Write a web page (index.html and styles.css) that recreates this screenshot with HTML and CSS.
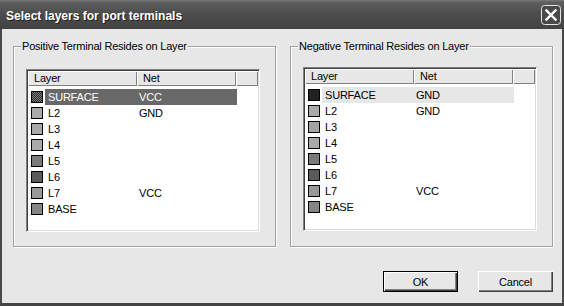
FILE: index.html
```html
<!DOCTYPE html>
<html>
<head>
<meta charset="utf-8">
<link rel="stylesheet" href="styles.css">
</head>
<body>
<div class="window">
  <div class="titlebar">
    <span class="title">Select layers for port terminals</span>
    <span class="close">
      <svg width="20" height="20" viewBox="0 0 20 20"><rect x="0.5" y="0.5" width="19" height="19" rx="3" fill="#4a4a4a" stroke="#e4e4e4"/><path d="M5.5 5.5 L14.5 14.5 M14.5 5.5 L5.5 14.5" stroke="#fff" stroke-width="2.4" stroke-linecap="square"/></svg>
    </span>
  </div>
  <div class="content">
    <div class="groups">
      <section class="group">
        <span class="legend">Positive Terminal Resides on Layer</span>
        <div class="list">
          <div class="lhead">
            <div class="hcell c-layer">Layer</div>
            <div class="hcell c-net">Net</div>
            <div class="hcell c-rest"></div>
          </div>
          <div class="rows">
            <div class="row"><span class="sw hatch"></span><span class="cells sel-dark"><span class="name">SURFACE</span><span class="net">VCC</span></span></div>
            <div class="row"><span class="sw g-aa"></span><span class="cells"><span class="name">L2</span><span class="net">GND</span></span></div>
            <div class="row"><span class="sw g-a8"></span><span class="cells"><span class="name">L3</span><span class="net"></span></span></div>
            <div class="row"><span class="sw g-aa"></span><span class="cells"><span class="name">L4</span><span class="net"></span></span></div>
            <div class="row"><span class="sw g-7a"></span><span class="cells"><span class="name">L5</span><span class="net"></span></span></div>
            <div class="row"><span class="sw g-5a"></span><span class="cells"><span class="name">L6</span><span class="net"></span></span></div>
            <div class="row"><span class="sw g-99"></span><span class="cells"><span class="name">L7</span><span class="net">VCC</span></span></div>
            <div class="row"><span class="sw g-85"></span><span class="cells"><span class="name">BASE</span><span class="net"></span></span></div>
          </div>
        </div>
      </section>
      <section class="group group-neg">
        <span class="legend">Negative Terminal Resides on Layer</span>
        <div class="list list-tall">
          <div class="lhead">
            <div class="hcell c-layer">Layer</div>
            <div class="hcell c-net">Net</div>
            <div class="hcell c-rest"></div>
          </div>
          <div class="rows">
            <div class="row"><span class="sw g-22"></span><span class="cells sel-light"><span class="name">SURFACE</span><span class="net">GND</span></span></div>
            <div class="row"><span class="sw g-aa"></span><span class="cells"><span class="name">L2</span><span class="net">GND</span></span></div>
            <div class="row"><span class="sw g-a4"></span><span class="cells"><span class="name">L3</span><span class="net"></span></span></div>
            <div class="row"><span class="sw g-aa"></span><span class="cells"><span class="name">L4</span><span class="net"></span></span></div>
            <div class="row"><span class="sw g-7a"></span><span class="cells"><span class="name">L5</span><span class="net"></span></span></div>
            <div class="row"><span class="sw g-5a"></span><span class="cells"><span class="name">L6</span><span class="net"></span></span></div>
            <div class="row"><span class="sw g-99"></span><span class="cells"><span class="name">L7</span><span class="net">VCC</span></span></div>
            <div class="row"><span class="sw g-85"></span><span class="cells"><span class="name">BASE</span><span class="net"></span></span></div>
          </div>
        </div>
      </section>
    </div>
    <div class="footer">
      <button class="btn btn-default">OK</button>
      <button class="btn">Cancel</button>
    </div>
  </div>
</div>
</body>
</html>
```
FILE: styles.css
```css
* { box-sizing: border-box; }
html, body { margin: 0; padding: 0; background: #e7e7e7; }
body {
  font-family: "Liberation Sans", Arial, sans-serif;
  font-size: 11px;
  letter-spacing: -0.2px;
  color: #000;
}
.window {
  width: 564px;
  height: 306px;
  display: flex;
  flex-direction: column;
  overflow: hidden;
}
.titlebar {
  height: 29px;
  flex: none;
  display: flex;
  align-items: flex-start;
  justify-content: space-between;
  padding: 0 3px 0 6px;
  background: linear-gradient(#7c7c7c 0, #5e5e5e 2px, #4e4e4e 45%, #424242 100%);
}
.title {
  margin-top: 9px;
  font-size: 12px;
  line-height: 14px;
  font-weight: bold;
  letter-spacing: 0;
  color: #fff;
  text-shadow: 1px 1px 0 #222;
}
.close {
  margin-top: 5px;
  width: 20px;
  height: 20px;
  display: block;
}
.close svg { display: block; }
.content {
  flex: 1;
  background: #e7e7e7;
  border-left: 2px solid #4a4a4a;
  border-right: 2px solid #4a4a4a;
  border-bottom: 3px solid #444;
  padding: 17px 9px 11px 11px;
  display: flex;
  flex-direction: column;
}
.groups {
  display: flex;
  gap: 14px;
}
.group {
  position: relative;
  width: 263px;
  height: 201px;
  border: 1px solid #a0a0a0;
  box-shadow: 1px 1px 0 #fff, inset 1px 1px 0 #fff;
  padding: 22px 0 0 12px;
}
.group-neg { padding-top: 20px; }
.legend {
  position: absolute;
  top: -7px;
  left: 7px;
  padding: 0 1px;
  line-height: 13px;
  background: #e7e7e7;
  white-space: nowrap;
}
.list {
  width: 234px;
  height: 163px;
  background: #fff;
  border: 1px solid;
  border-color: #808080 #fff #fff #808080;
  box-shadow: inset 1px 1px 0 #404040, inset -1px -1px 0 #dcdcdc;
  padding: 1px;
  overflow: hidden;
}
.list-tall { height: 164px; }
.lhead {
  display: flex;
  height: 15px;
}
.hcell {
  height: 15px;
  background: #e7e7e7;
  box-shadow: inset 1px 1px 0 #fff, inset -1px -1px 0 #808080;
  padding: 1px 0 0 6px;
  line-height: 13px;
}
.c-layer { width: 109px; }
.c-net { width: 99px; }
.c-rest { flex: 1; }
.rows { padding-top: 3px; }
.row {
  height: 16px;
  display: flex;
  align-items: center;
  padding-left: 3px;
}
.sw {
  width: 12px;
  height: 12px;
  border: 1px solid #000;
  flex: none;
}
.cells {
  margin-left: 2px;
  width: 192px;
  height: 16px;
  display: flex;
  line-height: 16px;
}
.name { width: 92px; padding-left: 3px; }
.net { width: 100px; padding-left: 2px; }
.sel-dark { background: #686868; color: #fff; }
.sel-light { background: #e7e7e7; }
.hatch { background: repeating-conic-gradient(#2a2a2a 0 25%, #808080 0 50%) 0 0 / 2px 2px; }
.g-22 { background: #222; }
.g-aa { background: #aaa; }
.g-a8 { background: #a8a8a8; }
.g-a4 { background: #a4a4a4; }
.g-7a { background: #7a7a7a; }
.g-5a { background: #5a5a5a; }
.g-99 { background: #999; }
.g-85 { background: #858585; }
.footer {
  margin-top: 24px;
  display: flex;
  justify-content: flex-end;
  gap: 20px;
}
.btn {
  width: 75px;
  height: 21px;
  margin: 0;
  padding: 0;
  font: inherit;
  letter-spacing: -0.2px;
  color: #000;
  background: #e7e7e7;
  border: none;
  box-shadow: inset 1px 1px 0 #fff, inset -1px -1px 0 #404040, inset -2px -2px 0 #808080;
}
.btn-default {
  border: 1px solid #000;
  box-shadow: inset 1px 1px 0 #fff, inset -1px -1px 0 #404040, inset -2px -2px 0 #808080;
}
```
